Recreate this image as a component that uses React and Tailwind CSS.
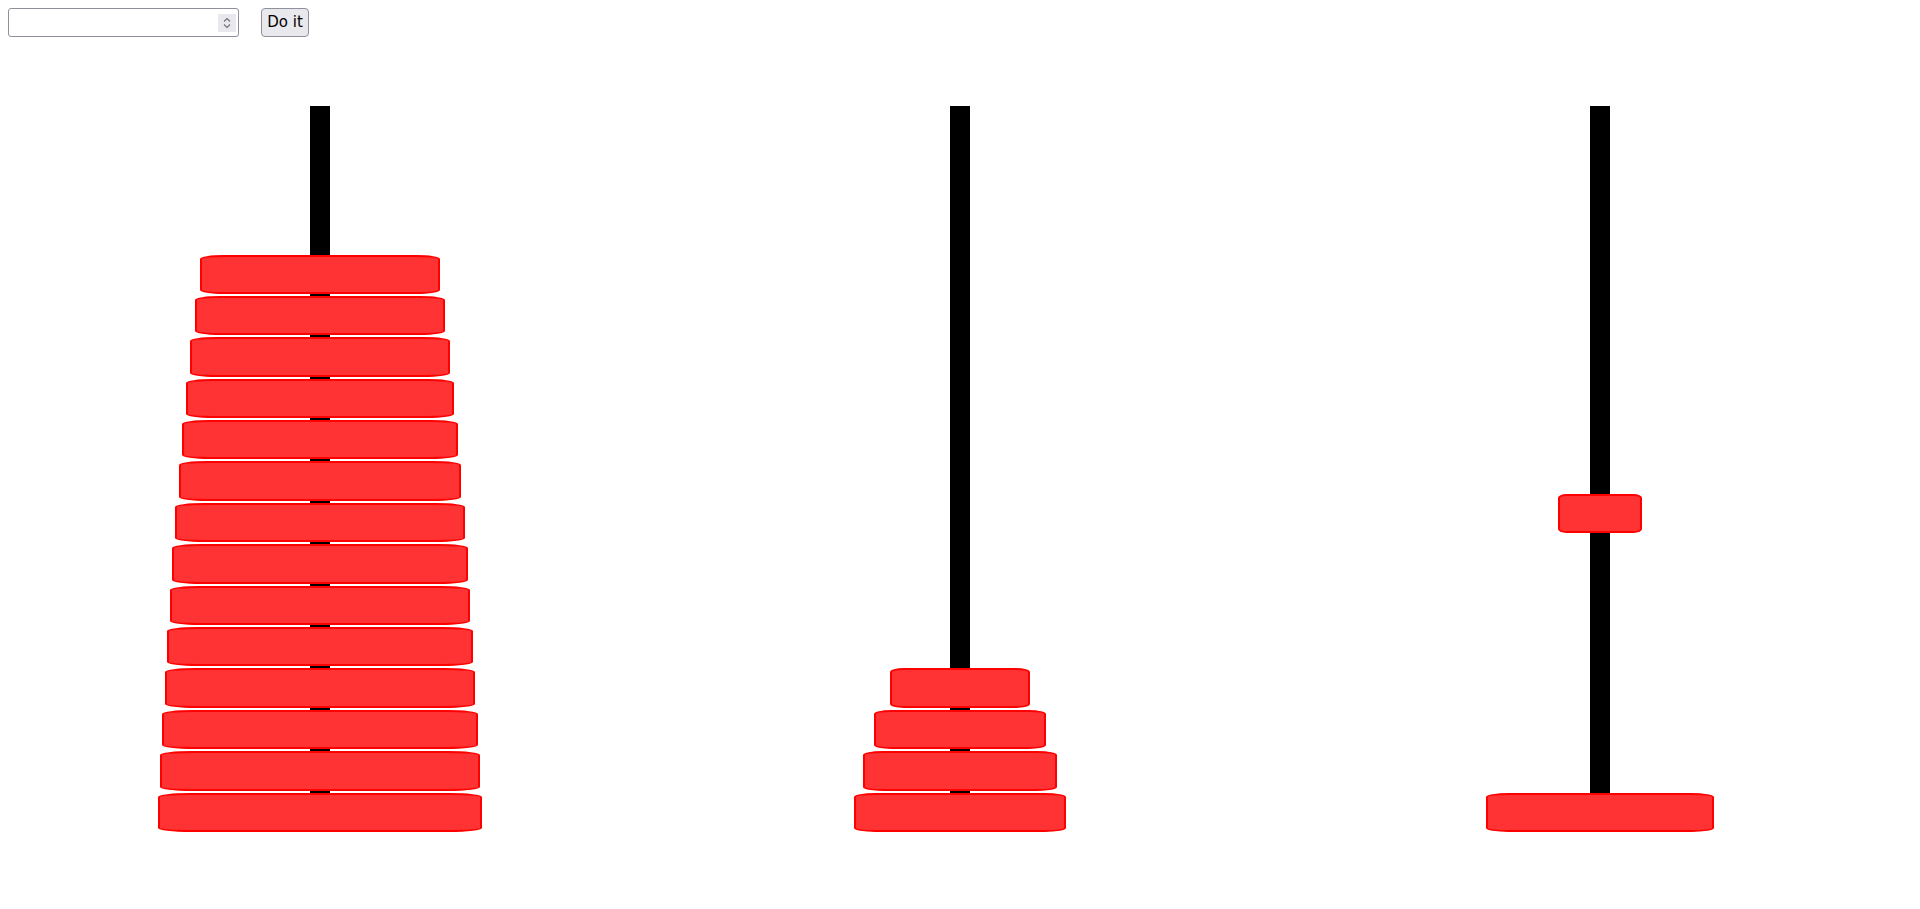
import { useState } from 'react';

// disk width grows with the log of its size index
const diskWidth = (n) => 84 + 80 * Math.log(n);

const towers = [
  [20, 19, 18, 17, 16, 15, 14, 13, 12, 11, 10, 9, 8, 7],
  [5, 4, 3, 2],
  [6],
];

function Disk({ size }) {
  return (
    <div
      className="h-[39.4px] shrink-0 rounded-[10%] border-2 border-[#ff0000] bg-[#ff3333]"
      style={{ width: diskWidth(size) }}
    />
  );
}

function Tower({ disks, moving }) {
  return (
    <div className="relative flex h-[726px] flex-1 flex-col-reverse items-center gap-[2px]">
      <div className="absolute inset-y-0 left-1/2 w-5 -translate-x-1/2 bg-black" />
      {disks.map((d) => (
        <div key={d} className="relative">
          <Disk size={d} />
        </div>
      ))}
      {moving && (
        <div className="absolute left-1/2 top-[388px] -translate-x-1/2">
          <Disk size={moving} />
        </div>
      )}
    </div>
  );
}

function Spinner() {
  return (
    <div className="flex h-[18px] w-[18px] flex-col items-center justify-center gap-[2px] bg-[#e9e9ed]">
      <svg width="8" height="5" viewBox="0 0 8 5" fill="none" stroke="#6f6f7a" strokeWidth="1.1">
        <path d="M1 4.5 L4 1.5 L7 4.5" />
      </svg>
      <svg width="8" height="5" viewBox="0 0 8 5" fill="none" stroke="#6f6f7a" strokeWidth="1.1">
        <path d="M1 0.5 L4 3.5 L7 0.5" />
      </svg>
    </div>
  );
}

export default function App() {
  const [count, setCount] = useState('');

  return (
    <div className="min-h-screen bg-white font-['DejaVu_Sans',sans-serif]">
      <div className="flex items-center gap-[22px] p-2">
        <div className="flex h-[29px] w-[231px] items-center rounded-[3px] border border-[#8f8f9d] bg-white pr-[2px]">
          <input
            type="text"
            inputMode="numeric"
            value={count}
            onChange={(e) => setCount(e.target.value)}
            className="h-full min-w-0 flex-1 bg-transparent px-1 text-[15px] outline-none"
            aria-label="Number of disks"
          />
          <Spinner />
        </div>
        <button className="h-[29px] w-[48px] rounded-[4px] border border-[#8f8f9d] bg-[#e9e9ed] text-[15px] text-black">
          Do it
        </button>
      </div>
      <div className="mt-[61px] flex">
        <Tower disks={towers[0]} />
        <Tower disks={towers[1]} />
        <Tower disks={towers[2]} moving={1} />
      </div>
    </div>
  );
}
